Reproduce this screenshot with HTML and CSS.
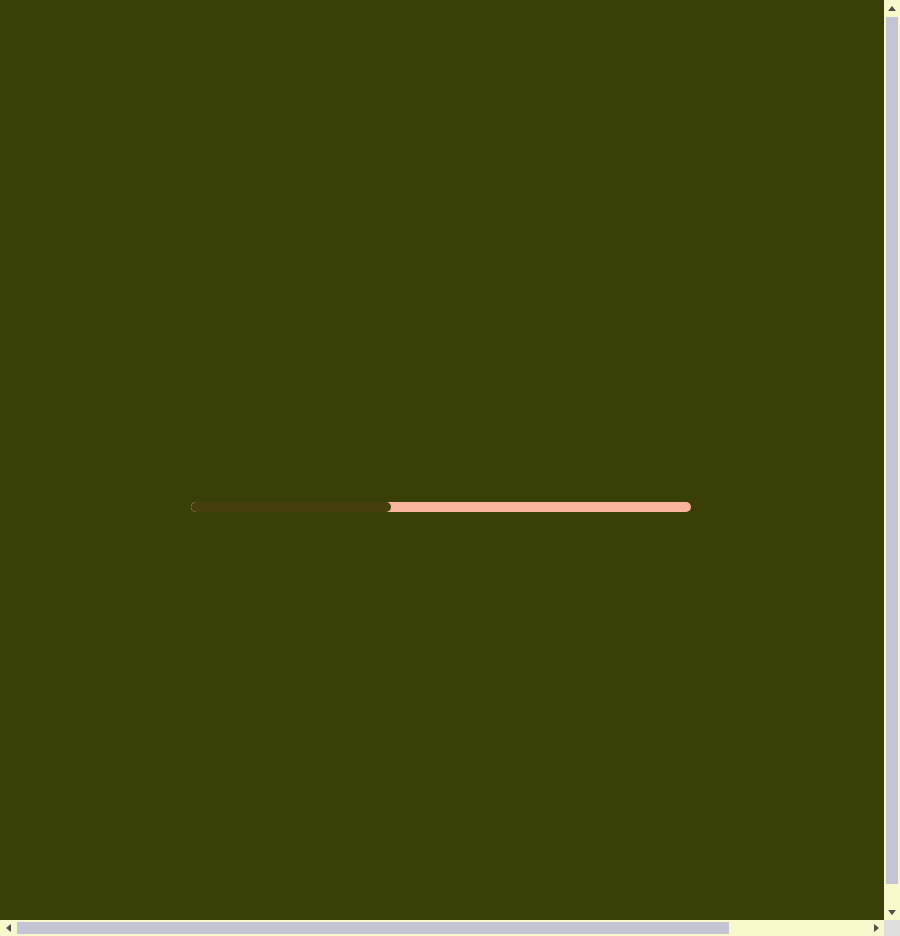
FILE: index.html
```html
<!DOCTYPE html>
<html lang="en">
<head>
<meta charset="utf-8">
<title>Progress</title>
<link rel="stylesheet" href="styles.css">
</head>
<body>
<main class="stage">
  <div class="progress" role="progressbar" aria-valuemin="0" aria-valuemax="100" aria-valuenow="40">
    <div class="progress-value" style="width: 40%"></div>
  </div>
</main>

<div class="scrollbar scrollbar-v" aria-hidden="true">
  <span class="sb-btn"><svg width="8" height="5" viewBox="0 0 8 5"><path d="M0 5L4 0L8 5Z"/></svg></span>
  <span class="sb-track"><span class="sb-thumb" style="height: 97.8%"></span></span>
  <span class="sb-btn"><svg width="8" height="5" viewBox="0 0 8 5"><path d="M0 0L8 0L4 5Z"/></svg></span>
</div>
<div class="scrollbar scrollbar-h" aria-hidden="true">
  <span class="sb-btn"><svg width="5" height="8" viewBox="0 0 5 8"><path d="M5 0L5 8L0 4Z"/></svg></span>
  <span class="sb-track"><span class="sb-thumb" style="width: 83.8%"></span></span>
  <span class="sb-btn"><svg width="5" height="8" viewBox="0 0 5 8"><path d="M0 0L5 4L0 8Z"/></svg></span>
</div>
<div class="scrollbar-corner" aria-hidden="true"></div>
</body>
</html>
```
FILE: styles.css
```css
html {
  background: #3a3f07;
}
body {
  margin: 0;
  font-family: "Liberation Sans", Arial, sans-serif;
}
.stage {
  width: 1058px;
  height: 943px;
  box-sizing: border-box;
  padding: 502px 0 0 191px;
}
.progress {
  width: 500px;
  height: 10px;
  border-radius: 5px;
  background: #f9b49e;
  overflow: hidden;
  display: flex;
}
.progress-value {
  height: 100%;
  background: #463e0c;
  border-radius: 5px;
}

/* overlay scrollbars */
.scrollbar {
  position: fixed;
  display: flex;
  background: #f8f8cc;
}
.scrollbar-v {
  top: 0;
  right: 0;
  bottom: 16px;
  width: 16px;
  flex-direction: column;
}
.scrollbar-h {
  left: 0;
  bottom: 0;
  right: 16px;
  height: 16px;
  flex-direction: row;
}
.sb-btn {
  flex: 0 0 16px;
  display: flex;
  align-items: center;
  justify-content: center;
  width: 16px;
  height: 16px;
}
.sb-btn svg {
  display: block;
  fill: #4e4e4e;
}
.sb-track {
  flex: 1;
  display: flex;
  box-sizing: border-box;
}
.scrollbar-v .sb-track {
  flex-direction: column;
  padding: 1px 2px;
}
.scrollbar-h .sb-track {
  flex-direction: row;
  padding: 2px 1px;
}
.sb-thumb {
  display: block;
  background: #c4c4d4;
}
.scrollbar-v .sb-thumb {
  width: 100%;
}
.scrollbar-h .sb-thumb {
  height: 100%;
}
.scrollbar-corner {
  position: fixed;
  right: 0;
  bottom: 0;
  width: 16px;
  height: 16px;
  background: #dededa;
}
```
